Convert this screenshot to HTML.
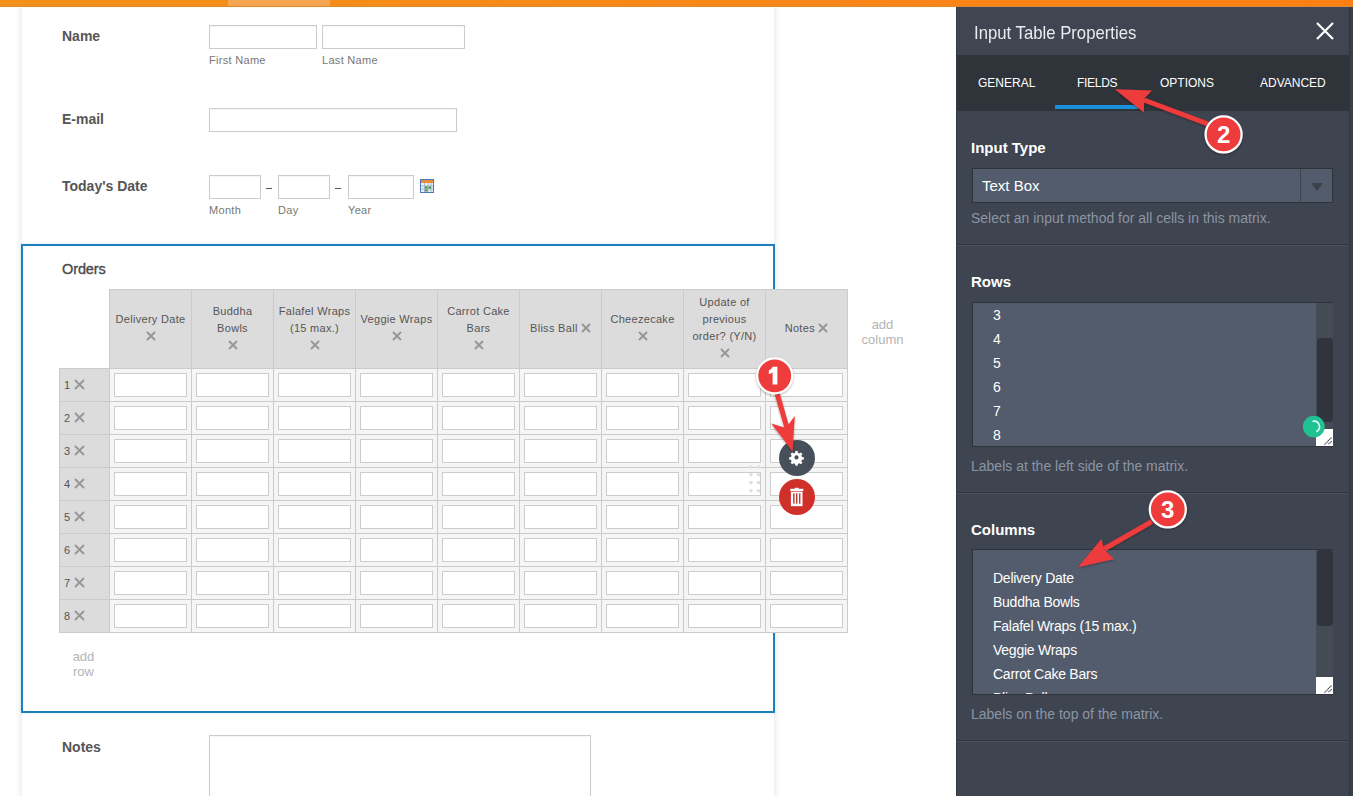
<!DOCTYPE html>
<html><head><meta charset="utf-8">
<style>
*{box-sizing:border-box;margin:0;padding:0}
html,body{width:1353px;height:796px;overflow:hidden;background:#fff;font-family:"Liberation Sans",sans-serif;position:relative}
.abs{position:absolute}
#topbar{left:0;top:0;width:1353px;height:7px;background:linear-gradient(90deg,#f3911b,#fd7f16);border-bottom:1px solid #d98a3a}
#topbar .hl{position:absolute;left:228px;top:0;width:102px;height:6px;background:#f6a550}
#form{left:22px;top:7px;width:752px;height:789px;background:#fff}
#shl{left:15px;top:8px;width:7px;height:788px;background:linear-gradient(90deg,#fff,#fafafa 40%,#eff0f2)}
#shr{left:774px;top:8px;width:7px;height:788px;background:linear-gradient(90deg,#eff0f2,#fafafa 60%,#fff)}
#yl{left:0;top:7px;width:956px;height:1px;background:#fffbe3}
.lbl{position:absolute;font-weight:bold;font-size:14px;color:#555;line-height:16px}
.inp{position:absolute;border:1px solid #ccc;background:#fff;box-shadow:inset 0 1px 1px rgba(0,0,0,.04)}
.sub{position:absolute;font-size:11px;color:#777;line-height:13px;letter-spacing:.3px}
.dash{position:absolute;width:6px;height:1px;background:#555;top:188px}
#orders{left:21px;top:244px;width:754px;height:469px;border:2px solid #1f7fbb;box-shadow:0 0 2px rgba(80,200,255,.35)}
#tbl{position:absolute;left:59px;top:289px;border-collapse:collapse;table-layout:fixed}
#tbl td,#tbl th{border:1px solid #cbcbcb;padding:0}
#tbl th{background:#dcdcdc;width:82px;height:79px;font-weight:normal;font-size:11px;line-height:17px;color:#555;letter-spacing:.3px;text-align:center;vertical-align:middle;padding-bottom:2px}
#tbl th.corner{background:#fff;border:none;border-right:1px solid #cbcbcb;border-bottom:1px solid #cbcbcb;width:50px}
#tbl td{background:#f5f5f5;height:33px}
#tbl td.rh{background:#dcdcdc;font-size:11px;color:#555;padding-left:4px;text-align:left}
#tbl td .ci{display:block;margin:0 auto;width:73px;height:24px;border:1px solid #ccc;background:#fff}
.x{color:#8a8a8a;font-size:12px}

#panel{left:956px;top:7px;width:397px;height:789px;background:#3e4450}
.pt{position:absolute;color:#fff;white-space:nowrap}
#phead{left:956px;top:7px;width:393px;height:48px;background:#3f4651}
#ptabs{left:956px;top:55px;width:393px;height:56px;background:#2f333a}
#pstrip{left:1349px;top:7px;width:4px;height:789px;background:#3a3f48;border-left:1px solid #30353c}
.tab{position:absolute;top:77px;font-size:12px;line-height:12px;color:#fff}
.sec{position:absolute;left:956px;width:393px;height:2px;background:#30353c;border-bottom:1px solid #4b515c}
.h3{position:absolute;left:971px;font-size:15px;font-weight:bold;color:#fff;line-height:15px}
.help{position:absolute;left:971px;font-size:14px;color:#8c95a3;line-height:14px;white-space:nowrap}
.sel{position:absolute;left:972px;width:361px;background:#525c6c;border:1px solid #2e333a}
.ta{position:absolute;left:972px;width:361px;background:#525c6c;border:1px solid #2e333a;overflow:hidden}
.ta .ln{position:absolute;left:20px;font-size:14px;letter-spacing:-.25px;line-height:24px;color:#fff;white-space:nowrap}
.track{position:absolute;left:1316px;width:17px;background:#454b55}
.thumb{position:absolute;left:1317px;width:16px;background:#30353d;border-radius:3px}
.grip{position:absolute;left:1316px;width:17px;height:17px;background:#fff}
</style></head><body>
<div id="topbar" class="abs"><div class="hl"></div></div>
<div id="form" class="abs"></div><div id="shl" class="abs"></div><div id="shr" class="abs"></div><div id="yl" class="abs"></div>
<div class="lbl" style="left:62px;top:28px">Name</div>
<div class="inp" style="left:209px;top:25px;width:108px;height:24px"></div>
<div class="inp" style="left:322px;top:25px;width:143px;height:24px"></div>
<div class="sub" style="left:209px;top:54px">First Name</div>
<div class="sub" style="left:322px;top:54px">Last Name</div>

<div class="lbl" style="left:62px;top:111px">E-mail</div>
<div class="inp" style="left:209px;top:108px;width:248px;height:24px"></div>

<div class="lbl" style="left:62px;top:178px">Today's Date</div>
<div class="inp" style="left:209px;top:175px;width:52px;height:24px"></div>
<div class="dash" style="left:266px"></div>
<div class="inp" style="left:278px;top:175px;width:52px;height:24px"></div>
<div class="dash" style="left:335px"></div>
<div class="inp" style="left:348px;top:175px;width:66px;height:24px"></div>
<div class="sub" style="left:209px;top:204px">Month</div>
<div class="sub" style="left:278px;top:204px">Day</div>
<div class="sub" style="left:348px;top:204px">Year</div>

<div id="orders" class="abs"></div>
<div class="abs" style="left:62px;top:261px;font-size:14.5px;line-height:16px;color:#4a4a4a;-webkit-text-stroke:.35px #4a4a4a;letter-spacing:-.1px">Orders</div>
<table id="tbl">
<tr><th class="corner"></th><th>Delivery Date<br><span class="x"><svg width="10" height="10" viewBox="0 0 10 10" style="vertical-align:-1px"><path d="M1 1L9 9M9 1L1 9" stroke="#959595" stroke-width="1.8"/></svg></span></th><th>Buddha<br>Bowls<br><span class="x"><svg width="10" height="10" viewBox="0 0 10 10" style="vertical-align:-1px"><path d="M1 1L9 9M9 1L1 9" stroke="#959595" stroke-width="1.8"/></svg></span></th><th>Falafel Wraps<br>(15 max.)<br><span class="x"><svg width="10" height="10" viewBox="0 0 10 10" style="vertical-align:-1px"><path d="M1 1L9 9M9 1L1 9" stroke="#959595" stroke-width="1.8"/></svg></span></th><th>Veggie Wraps<br><span class="x"><svg width="10" height="10" viewBox="0 0 10 10" style="vertical-align:-1px"><path d="M1 1L9 9M9 1L1 9" stroke="#959595" stroke-width="1.8"/></svg></span></th><th>Carrot Cake<br>Bars<br><span class="x"><svg width="10" height="10" viewBox="0 0 10 10" style="vertical-align:-1px"><path d="M1 1L9 9M9 1L1 9" stroke="#959595" stroke-width="1.8"/></svg></span></th><th>Bliss Ball <span class="x"><svg width="10" height="10" viewBox="0 0 10 10" style="vertical-align:-1px"><path d="M1 1L9 9M9 1L1 9" stroke="#959595" stroke-width="1.8"/></svg></span></th><th>Cheezecake<br><span class="x"><svg width="10" height="10" viewBox="0 0 10 10" style="vertical-align:-1px"><path d="M1 1L9 9M9 1L1 9" stroke="#959595" stroke-width="1.8"/></svg></span></th><th>Update of<br>previous<br>order? (Y/N)<br><span class="x"><svg width="10" height="10" viewBox="0 0 10 10" style="vertical-align:-1px"><path d="M1 1L9 9M9 1L1 9" stroke="#959595" stroke-width="1.8"/></svg></span></th><th>Notes <span class="x"><svg width="10" height="10" viewBox="0 0 10 10" style="vertical-align:-1px"><path d="M1 1L9 9M9 1L1 9" stroke="#959595" stroke-width="1.8"/></svg></span></th></tr>
<tr><td class="rh">1 <svg width="11" height="11" viewBox="0 0 11 11" style="vertical-align:-1px;margin-left:1px"><path d="M1 1L10 10M10 1L1 10" stroke="#979797" stroke-width="1.9"/></svg></td><td><span class="ci"></span></td><td><span class="ci"></span></td><td><span class="ci"></span></td><td><span class="ci"></span></td><td><span class="ci"></span></td><td><span class="ci"></span></td><td><span class="ci"></span></td><td><span class="ci"></span></td><td><span class="ci"></span></td></tr>
<tr><td class="rh">2 <svg width="11" height="11" viewBox="0 0 11 11" style="vertical-align:-1px;margin-left:1px"><path d="M1 1L10 10M10 1L1 10" stroke="#979797" stroke-width="1.9"/></svg></td><td><span class="ci"></span></td><td><span class="ci"></span></td><td><span class="ci"></span></td><td><span class="ci"></span></td><td><span class="ci"></span></td><td><span class="ci"></span></td><td><span class="ci"></span></td><td><span class="ci"></span></td><td><span class="ci"></span></td></tr>
<tr><td class="rh">3 <svg width="11" height="11" viewBox="0 0 11 11" style="vertical-align:-1px;margin-left:1px"><path d="M1 1L10 10M10 1L1 10" stroke="#979797" stroke-width="1.9"/></svg></td><td><span class="ci"></span></td><td><span class="ci"></span></td><td><span class="ci"></span></td><td><span class="ci"></span></td><td><span class="ci"></span></td><td><span class="ci"></span></td><td><span class="ci"></span></td><td><span class="ci"></span></td><td><span class="ci"></span></td></tr>
<tr><td class="rh">4 <svg width="11" height="11" viewBox="0 0 11 11" style="vertical-align:-1px;margin-left:1px"><path d="M1 1L10 10M10 1L1 10" stroke="#979797" stroke-width="1.9"/></svg></td><td><span class="ci"></span></td><td><span class="ci"></span></td><td><span class="ci"></span></td><td><span class="ci"></span></td><td><span class="ci"></span></td><td><span class="ci"></span></td><td><span class="ci"></span></td><td><span class="ci"></span></td><td><span class="ci"></span></td></tr>
<tr><td class="rh">5 <svg width="11" height="11" viewBox="0 0 11 11" style="vertical-align:-1px;margin-left:1px"><path d="M1 1L10 10M10 1L1 10" stroke="#979797" stroke-width="1.9"/></svg></td><td><span class="ci"></span></td><td><span class="ci"></span></td><td><span class="ci"></span></td><td><span class="ci"></span></td><td><span class="ci"></span></td><td><span class="ci"></span></td><td><span class="ci"></span></td><td><span class="ci"></span></td><td><span class="ci"></span></td></tr>
<tr><td class="rh">6 <svg width="11" height="11" viewBox="0 0 11 11" style="vertical-align:-1px;margin-left:1px"><path d="M1 1L10 10M10 1L1 10" stroke="#979797" stroke-width="1.9"/></svg></td><td><span class="ci"></span></td><td><span class="ci"></span></td><td><span class="ci"></span></td><td><span class="ci"></span></td><td><span class="ci"></span></td><td><span class="ci"></span></td><td><span class="ci"></span></td><td><span class="ci"></span></td><td><span class="ci"></span></td></tr>
<tr><td class="rh">7 <svg width="11" height="11" viewBox="0 0 11 11" style="vertical-align:-1px;margin-left:1px"><path d="M1 1L10 10M10 1L1 10" stroke="#979797" stroke-width="1.9"/></svg></td><td><span class="ci"></span></td><td><span class="ci"></span></td><td><span class="ci"></span></td><td><span class="ci"></span></td><td><span class="ci"></span></td><td><span class="ci"></span></td><td><span class="ci"></span></td><td><span class="ci"></span></td><td><span class="ci"></span></td></tr>
<tr><td class="rh">8 <svg width="11" height="11" viewBox="0 0 11 11" style="vertical-align:-1px;margin-left:1px"><path d="M1 1L10 10M10 1L1 10" stroke="#979797" stroke-width="1.9"/></svg></td><td><span class="ci"></span></td><td><span class="ci"></span></td><td><span class="ci"></span></td><td><span class="ci"></span></td><td><span class="ci"></span></td><td><span class="ci"></span></td><td><span class="ci"></span></td><td><span class="ci"></span></td><td><span class="ci"></span></td></tr>
</table>

<div id="panel" class="abs"></div>
<div id="phead" class="abs"></div>
<div id="ptabs" class="abs"></div>
<div id="pstrip" class="abs"></div><div class="abs" style="left:956px;top:7px;width:1px;height:789px;background:#353a42"></div>
<div class="pt" style="left:974px;top:24px;font-size:19px;line-height:17px;color:#e9ebee;transform:scaleX(.88);transform-origin:0 0">Input Table Properties</div>
<svg class="abs" style="left:1316px;top:22px" width="18" height="18" viewBox="0 0 18 18"><path d="M1 1L17 17M17 1L1 17" stroke="#fff" stroke-width="2.2"/></svg>
<div class="tab" style="left:978px">GENERAL</div>
<div class="tab" style="left:1077px;letter-spacing:-.3px">FIELDS</div>
<div class="tab" style="left:1160px">OPTIONS</div>
<div class="tab" style="left:1260px">ADVANCED</div>
<div class="abs" style="left:1055px;top:105px;width:83px;height:4px;background:#1a90d8"></div>

<div class="h3" style="top:140px">Input Type</div>
<div class="sel" style="top:168px;height:35px"></div>
<div class="abs" style="left:1300px;top:169px;width:1px;height:33px;background:#3e4450"></div>
<div class="abs" style="left:1311px;top:183px;width:0;height:0;border-left:6px solid transparent;border-right:6px solid transparent;border-top:8px solid #3c424c"></div>
<div class="pt" style="left:982px;top:178px;font-size:15px;line-height:15px">Text Box</div>
<div class="help" style="top:211px">Select an input method for all cells in this matrix.</div>
<div class="sec" style="top:244px"></div>

<div class="h3" style="top:274px">Rows</div>
<div class="ta" style="top:302px;height:145px">
 <div class="ln" style="top:0px;font-size:14px">3</div>
 <div class="ln" style="top:24px;font-size:14px">4</div>
 <div class="ln" style="top:48px;font-size:14px">5</div>
 <div class="ln" style="top:72px;font-size:14px">6</div>
 <div class="ln" style="top:96px;font-size:14px">7</div>
 <div class="ln" style="top:120px;font-size:14px">8</div>
</div>
<div class="track" style="top:303px;height:143px"></div>
<div class="thumb" style="top:338px;height:84px"></div>
<div class="grip" style="top:429px"><svg width="17" height="17" style="display:block"><path d="M8.4 15.7L15.9 8.1M12.4 15.2L15.9 12" stroke="#444" stroke-width="1.1" stroke-dasharray="1.2 .5"/></svg></div>
<svg class="abs" style="left:1302px;top:415px" width="23" height="23" viewBox="0 0 23 23"><circle cx="11.8" cy="11.6" r="10.9" fill="#20c192"/><path d="M11.05 6.2A5.6 5.6 0 0 1 14.8 16.5" stroke="#d8fff4" stroke-width="1.6" fill="none" stroke-linecap="round"/></svg>
<div class="help" style="top:459px">Labels at the left side of the matrix.</div>
<div class="sec" style="top:492px"></div>

<div class="h3" style="top:522px">Columns</div>
<div class="ta" style="top:549px;height:146px">
 <div class="ln" style="top:16px">Delivery Date</div>
 <div class="ln" style="top:40px">Buddha Bowls</div>
 <div class="ln" style="top:64px">Falafel Wraps (15 max.)</div>
 <div class="ln" style="top:88px">Veggie Wraps</div>
 <div class="ln" style="top:112px">Carrot Cake Bars</div>
 <div class="ln" style="top:136px">Bliss Ball</div>
</div>
<div class="track" style="top:550px;height:144px"></div>
<div class="thumb" style="top:550px;height:76px"></div>
<div class="grip" style="top:677px"><svg width="17" height="17" style="display:block"><path d="M8.4 15.7L15.9 8.1M12.4 15.2L15.9 12" stroke="#444" stroke-width="1.1" stroke-dasharray="1.2 .5"/></svg></div>
<div class="help" style="top:707px">Labels on the top of the matrix.</div>
<div class="sec" style="top:740px"></div>

<div class="abs" style="left:62px;top:649px;width:43px;text-align:center;font-size:13px;line-height:15px;color:#b5b5b5">add<br>row</div>
<div class="abs" style="left:858px;top:317px;width:49px;text-align:center;font-size:13px;line-height:15px;color:#b5b5b5">add<br>column</div>
<div class="lbl" style="left:62px;top:739px">Notes</div>
<div class="inp" style="left:209px;top:735px;width:382px;height:80px"></div>
<svg class="abs" style="left:420px;top:179px" width="14" height="14" viewBox="0 0 14 14">
 <rect x="0.5" y="0.5" width="13" height="13" fill="#e8f0fa" stroke="#4a78b8"/>
 <rect x="1" y="1" width="12" height="3" fill="#f08a3c"/>
 <path d="M1 7H13M1 10H13M4.5 4V13M8 4V13M11 4V13" stroke="#9ab" stroke-width=".8"/>
 <rect x="5" y="7.5" width="2.5" height="2" fill="#3a9a3a"/><rect x="8.5" y="7.5" width="2.5" height="2" fill="#3a9a3a"/><rect x="5" y="10.5" width="2.5" height="2" fill="#3a9a3a"/>
</svg>
<!-- drag dots -->
<svg class="abs" style="left:747px;top:463px" width="16" height="32">
 <g fill="#dedede"><circle cx="4" cy="4" r="1.8"/><circle cx="11.5" cy="4" r="1.8"/><circle cx="4" cy="11.7" r="1.8"/><circle cx="11.5" cy="11.7" r="1.8"/><circle cx="4" cy="19.6" r="1.8"/><circle cx="11.5" cy="19.6" r="1.8"/><circle cx="4" cy="27.7" r="1.8"/><circle cx="11.5" cy="27.7" r="1.8"/></g>
</svg>
<!-- gear & trash -->
<svg class="abs" style="left:779px;top:440px" width="36" height="36" viewBox="0 0 36 36">
 <circle cx="18" cy="18" r="18" fill="#474f5a"/>
 <g transform="translate(17.5 17.4) scale(.8)" fill="#fff">
  <path d="M-1.3 -8h2.6l.5 2.3 1.7.8 2-1.3 1.9 1.9-1.3 2 .8 1.7 2.3.5v2.6l-2.3.5-.8 1.7 1.3 2-1.9 1.9-2-1.3-1.7.8-.5 2.3h-2.6l-.5-2.3-1.7-.8-2 1.3-1.9-1.9 1.3-2-.8-1.7-2.3-.5v-2.6l2.3-.5.8-1.7-1.3-2 1.9-1.9 2 1.3 1.7-.8z"/>
  <circle r="2.6" fill="#474f5a"/>
 </g>
</svg>
<svg class="abs" style="left:779px;top:479px" width="36" height="36" viewBox="0 0 36 36">
 <circle cx="18" cy="18" r="18" fill="#d0302a"/>
 <g fill="#fff">
  <rect x="11.3" y="9.8" width="13" height="2.4"/>
  <rect x="15.8" y="8.8" width="4" height="1.5"/>
  <rect x="11.9" y="12.8" width="11.6" height="14.4"/>
 </g>
 <g fill="#b82a25"><rect x="14.2" y="14.3" width="1.3" height="10.4"/><rect x="17.1" y="14.3" width="1.3" height="10.4"/><rect x="20.1" y="14.3" width="1.3" height="10.4"/></g>
</svg>
<!-- annotations -->
<svg class="abs" style="left:0;top:0;overflow:visible" width="1353" height="796">
 <defs><filter id="sh" x="-20%" y="-20%" width="140%" height="140%"><feDropShadow dx="0" dy="1" stdDeviation="1" flood-color="#000" flood-opacity=".35"/></filter></defs>
 <g filter="url(#sh)" fill="#ee3a3a">
  <path d="M777 393L787 428" stroke="#ee3a3a" stroke-width="5"/>
  <path d="M792.6 451.5L771.3 423.6L786 428L794.8 416.1Z"/>
  <path d="M1208 124L1144 100" stroke="#ee3a3a" stroke-width="5"/>
  <path d="M1114.8 89.2L1152 90.4L1144.3 98.5L1143.8 112.5Z"/>
  <path d="M1152 521.5L1104 549" stroke="#ee3a3a" stroke-width="5"/>
  <path d="M1078 567.3L1101.5 538.7L1104 549.5L1114.2 559Z"/>
 </g>
 <g filter="url(#sh)">
  <circle cx="774.7" cy="375.8" r="17.5" fill="#ee3a3a" stroke="#fff" stroke-width="2.2"/>
  <circle cx="1223.6" cy="134.4" r="18" fill="#ee3a3a" stroke="#fff" stroke-width="2.2"/>
  <circle cx="1167.8" cy="509.4" r="18" fill="#ee3a3a" stroke="#fff" stroke-width="2.2"/>
 </g>
 <path fill="#fff" d="M772.6 366.7H777.4V384.4H772.6V372.4Q770.8 373.6 768.8 374V370.4Q771.6 369.4 772.6 366.7Z"/>
 <g fill="#fff" style="font-family:'Liberation Sans',sans-serif;font-weight:bold" text-anchor="middle">
  
  <text x="1223.6" y="143" font-size="24">2</text>
  <text x="1167.8" y="518" font-size="24">3</text>
 </g>
</svg>
</body></html>
